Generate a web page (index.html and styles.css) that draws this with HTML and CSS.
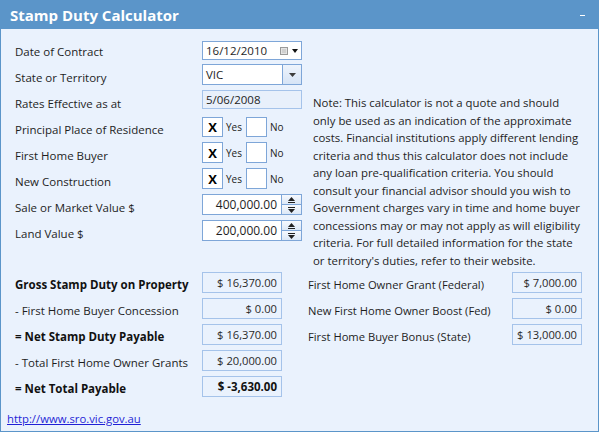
FILE: index.html
```html
<!DOCTYPE html>
<html>
<head>
<meta charset="utf-8">
<title>Stamp Duty Calculator</title>
<link rel="stylesheet" href="styles.css">
</head>
<body>
<div class="panel">
  <div class="header">
    <span class="title">Stamp Duty Calculator</span>
    <span class="minimize"></span>
  </div>

  <div class="form">
    <div class="label">Date of Contract</div>
    <div class="ctl date">
      <span class="val">16/12/2010</span>
      <svg class="cal" width="8" height="8" viewBox="0 0 8 8"><rect x="0.5" y="0.5" width="7" height="7" fill="#e4e4e4" stroke="#9a9a9a"/><rect x="2" y="2" width="4" height="4" fill="#d0d0d0"/></svg>
      <svg class="drop" width="6" height="4" viewBox="0 0 6 4"><path d="M0 0H6L3 4Z" fill="#111"/></svg>
    </div>
    <div class="note">
      <div class="note-a">
        <span class="ln">Note: This calculator is not a quote and should</span>
        <span class="ln">only be used as an indication of the approximate</span>
        <span class="ln">costs. Financial institutions apply different lending</span>
        <span class="ln">criteria and thus this calculator does not include</span>
        <span class="ln">any loan pre-qualification criteria. You should</span>
        <span class="ln">consult your financial advisor should you wish to</span>
      </div>
      <div class="note-b">
        <span class="ln">Government charges vary in time and home buyer</span>
        <span class="ln">concessions may or may not apply as will eligibility</span>
        <span class="ln">criteria. For full detailed information for the state</span>
        <span class="ln">or territory's duties, refer to their website.</span>
      </div>
    </div>

    <div class="label">State or Territory</div>
    <div class="ctl combo">
      <span class="val">VIC</span>
      <span class="combo-btn"><svg width="7" height="4" viewBox="0 0 7 4"><path d="M0 0H7L3.5 4Z" fill="#3c3c3c"/></svg></span>
    </div>

    <div class="label">Rates Effective as at</div>
    <div class="ctl readonly"><span class="val">5/06/2008</span></div>

    <div class="label">Principal Place of Residence</div>
    <div class="checks c1">
      <span class="box">X</span><span class="opt">Yes</span>
      <span class="box"></span><span class="opt">No</span>
    </div>

    <div class="label">First Home Buyer</div>
    <div class="checks">
      <span class="box">X</span><span class="opt">Yes</span>
      <span class="box"></span><span class="opt">No</span>
    </div>

    <div class="label">New Construction</div>
    <div class="checks">
      <span class="box">X</span><span class="opt">Yes</span>
      <span class="box"></span><span class="opt">No</span>
    </div>

    <div class="label">Sale or Market Value $</div>
    <div class="spin">
      <span class="spin-val">400,000.00</span>
      <span class="spin-btns">
        <span class="sb"><svg width="7" height="6" viewBox="0 0 7 6"><path d="M3.5 0L7 4H0Z" fill="#222"/><rect y="5" width="7" height="1" fill="#222"/></svg></span>
        <span class="sb"><svg width="7" height="6" viewBox="0 0 7 6"><rect y="0" width="7" height="1" fill="#222"/><path d="M0 2H7L3.5 6Z" fill="#222"/></svg></span>
      </span>
    </div>

    <div class="label">Land Value $</div>
    <div class="spin">
      <span class="spin-val">200,000.00</span>
      <span class="spin-btns">
        <span class="sb"><svg width="7" height="6" viewBox="0 0 7 6"><path d="M3.5 0L7 4H0Z" fill="#222"/><rect y="5" width="7" height="1" fill="#222"/></svg></span>
        <span class="sb"><svg width="7" height="6" viewBox="0 0 7 6"><rect y="0" width="7" height="1" fill="#222"/><path d="M0 2H7L3.5 6Z" fill="#222"/></svg></span>
      </span>
    </div>
  </div>

  <div class="results">
    <div class="rlabel bold">Gross Stamp Duty on Property</div>
    <div class="rbox">$ 16,370.00</div>
    <div class="rlabel right">First Home Owner Grant (Federal)</div>
    <div class="rbox">$ 7,000.00</div>

    <div class="rlabel">- First Home Buyer Concession</div>
    <div class="rbox">$ 0.00</div>
    <div class="rlabel right">New First Home Owner Boost (Fed)</div>
    <div class="rbox">$ 0.00</div>

    <div class="rlabel bold">= Net Stamp Duty Payable</div>
    <div class="rbox">$ 16,370.00</div>
    <div class="rlabel right">First Home Buyer Bonus (State)</div>
    <div class="rbox">$ 13,000.00</div>

    <div class="rlabel">- Total First Home Owner Grants</div>
    <div class="rbox">$ 20,000.00</div>

    <div class="rlabel bold">= Net Total Payable</div>
    <div class="rbox bold">$ -3,630.00</div>
  </div>

  <div class="footer">
    <a class="link" href="#">http://www.sro.vic.gov.au</a>
  </div>
</div>
</body>
</html>
```

FILE: styles.css
```css
* { box-sizing: border-box; }

html, body {
  margin: 0;
  padding: 0;
  background: #ffffff;
}

body {
  font-family: "Open Sans", "Noto Sans", sans-serif;
  font-size: 11.5px;
  color: #1e1e1e;
}

.panel {
  width: 599px;
  height: 432px;
  background: #eaf2fd;
  border: 1px solid #5b95c9;
  border-top: none;
  display: flex;
  flex-direction: column;
  overflow: hidden;
}

.panel > * { flex-shrink: 0; }

.header {
  height: 29px;
  margin: 0 -1px;
  background: #5b95c9;
  display: flex;
  align-items: center;
  justify-content: space-between;
  padding: 0 14px 0 10px;
}

.title {
  color: #ffffff;
  font-weight: 700;
  font-size: 15px;
}

.minimize {
  width: 5px;
  height: 1px;
  background: #ffffff;
  margin-top: 2px;
}

.form {
  display: grid;
  grid-template-columns: 187px 100px 1fr;
  grid-template-rows: repeat(8, 26px);
  padding: 9px 0 0 14px;
}

.label {
  grid-column: 1;
  align-self: center;
  white-space: nowrap;
  padding-top: 1px;
}

.ctl {
  grid-column: 2;
  height: 21px;
  border: 1px solid #7ea6d8;
  background: #ffffff;
  display: flex;
  align-items: center;
}

.val {
  padding-left: 3px;
  flex: 1;
  font-size: 11.5px;
}

.date {
  height: 19px;
  margin-top: 3px;
}

.date .cal { margin-right: 4px; }
.date .drop { margin-right: 3px; }

.combo .combo-btn {
  width: 19px;
  height: 100%;
  border-left: 1px solid #7ea6d8;
  background: linear-gradient(#eef4fc, #d6e4f6);
  display: flex;
  align-items: center;
  justify-content: center;
}

.readonly {
  height: 19px;
  background: #e8f0fb;
  border-color: #a5c3ea;
}

.checks {
  grid-column: 2;
  display: flex;
  align-items: center;
  height: 21px;
}

.checks.c1 { margin-top: 1px; height: 20px; }

.box {
  width: 21px;
  height: 100%;
  border: 1px solid #7ea6d8;
  background: #ffffff;
  display: flex;
  align-items: center;
  justify-content: center;
  font-weight: 700;
  font-size: 13px;
  color: #000;
}

.opt {
  font-size: 10px;
  width: 23px;
  padding-left: 3px;
  color: #222;
}

.spin {
  grid-column: 2;
  height: 21px;
  display: flex;
}

.spin-val {
  flex: 1;
  border: 1px solid #7ea6d8;
  background: #ffffff;
  display: flex;
  align-items: center;
  justify-content: flex-end;
  padding-right: 4px;
  font-size: 12px;
}

.spin-btns {
  width: 20px;
  display: flex;
  flex-direction: column;
  border: 1px solid #7ea6d8;
  border-left: none;
}

.sb {
  flex: 1;
  display: flex;
  align-items: center;
  justify-content: center;
  background: linear-gradient(#f6f9fe, #dce8f7);
}

.sb + .sb { border-top: 1px solid #7ea6d8; }

.note {
  grid-column: 3;
  grid-row: 3 / span 6;
  padding: 4px 0 0 11px;
  line-height: 17.5px;
  font-size: 11.4px;
}

.note-a {
  height: 105px;
  overflow: hidden;
}

.ln {
  display: block;
  white-space: nowrap;
}

.results {
  display: grid;
  grid-template-columns: 187px 80px 26px 204px 70px;
  grid-auto-rows: 26px;
  padding-left: 14px;
  margin-top: 25px;
}

.rlabel {
  grid-column: 1;
  align-self: center;
  white-space: nowrap;
  padding-top: 1px;
}

.rlabel.right { grid-column: 4; font-size: 11.2px; }

.rbox {
  margin-top: 1px;
  height: 21px;
  border: 1px solid #a5c3ea;
  display: flex;
  align-items: center;
  justify-content: flex-end;
  padding-right: 4px;
  color: #2a2a2a;
  white-space: nowrap;
  font-size: 11.2px;
}

.rbox.bold { font-size: 11.5px; }

.bold { font-weight: 700; color: #111; }

.footer {
  padding: 10px 0 0 6px;
}

.link {
  color: #1f1fd6;
  text-decoration: underline;
  font-size: 11.3px;
}
```
